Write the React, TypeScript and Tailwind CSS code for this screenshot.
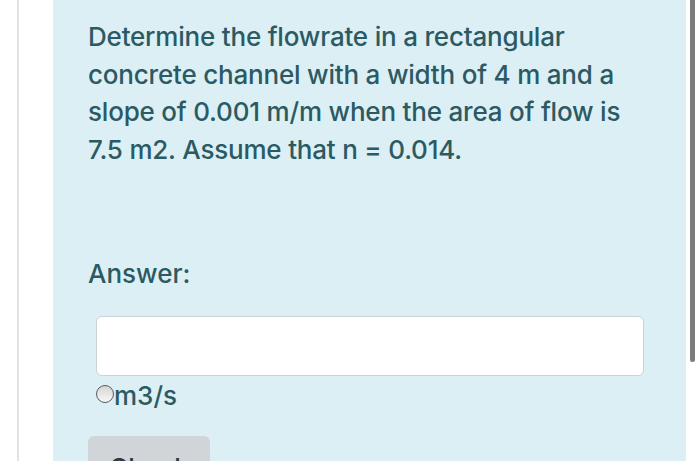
import React from "react";

const App = () => {
  return (
    <div
      className="w-[700px] h-[463px] bg-white flex overflow-hidden"
      style={{ fontFamily: "Inter, 'Liberation Sans', sans-serif" }}
    >
      {/* Left rule */}
      <div className="ml-[17px] w-[2px] h-[461px] bg-[#e3e3e3]" />

      {/* Question panel */}
      <div className="ml-[34px] w-[633px] h-[461px] bg-[#dbeff5] pl-[35px] pt-[18px] overflow-hidden text-[#2c5a63]">
        <p className="w-[548px] text-[26px] leading-[37.5px] font-medium tracking-[-0.2px]">
          Determine the flowrate in a rectangular concrete channel with a width of 4 m and a
          slope of 0.001 m/m when the area of flow is 7.5 m2. Assume that n = 0.014.
        </p>

        <div className="mt-[91px] text-[26px] leading-[30px] font-medium">Answer:</div>

        <div className="ml-[8px] mt-[27px] w-[548px] h-[60px] bg-white rounded-[6px] border border-[#ccd3d6]" />

        <div className="flex items-center mt-[2px] ml-[8px] h-[32px]">
          <span className="w-[18px] h-[18px] rounded-full border border-[#5b5b5b] bg-gradient-to-b from-[#d6d6d6] to-[#f7f7f7]" />
          <span className="text-[26px] leading-[30px] font-medium mt-[4px]">m3/s</span>
        </div>

        <button className="mt-[26px] w-[122px] h-[50px] bg-[#d1d5da] rounded-[6px] text-[26px] font-medium text-[#2a3a40] pt-[14px] leading-[30px]">
          Check
        </button>
      </div>

      {/* Scrollbar */}
      <div className="ml-[4px] w-[5px] h-[362px] bg-[#7b7b7b] rounded-b-full" />
    </div>
  );
};

export default App;
